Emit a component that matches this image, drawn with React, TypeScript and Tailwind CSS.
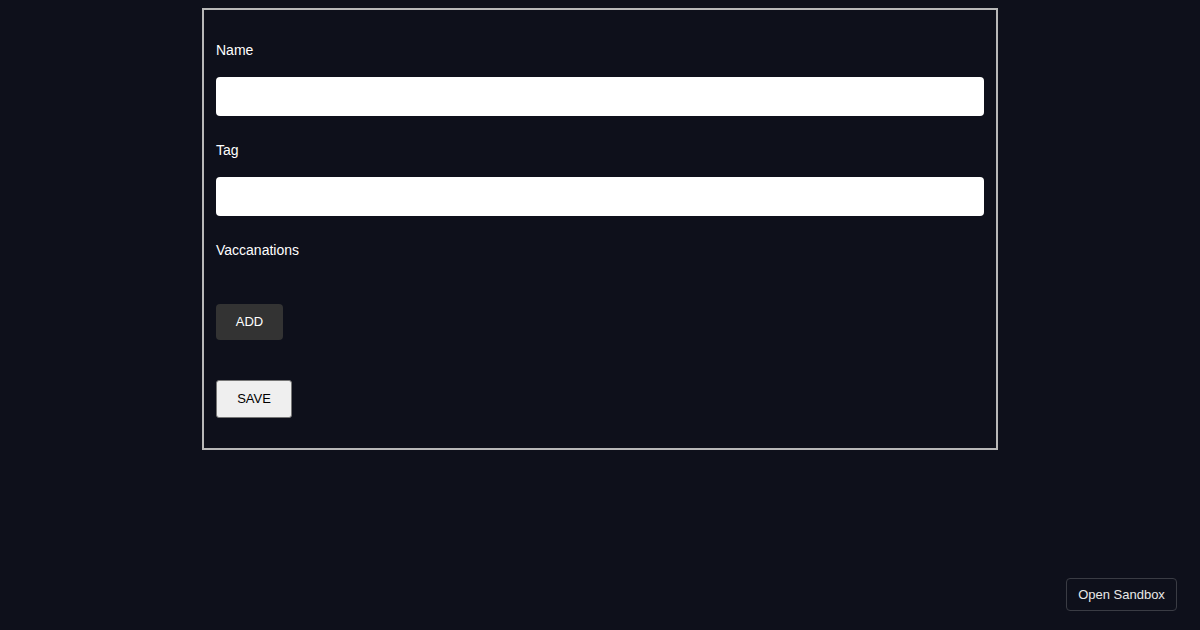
import React from 'react'

const Field = ({ label }: { label: string }) => (
  <div className="flex flex-col">
    <label className="h-5 leading-5 text-[14px] text-white">{label}</label>
    <input type="text" className="mt-[17px] h-[39px] w-full rounded-[4px] bg-white px-2 text-black outline-none" />
  </div>
)

export default function App() {
  return (
    <div className="relative h-[630px] w-full bg-[#0e101b] font-['Liberation_Sans',Arial,sans-serif]">
      <div className="pt-2">
        <form className="mx-auto w-[796px] border-2 border-[#b8b8b8] px-3 pb-[30px] pt-[30px]">
          <div className="flex flex-col gap-6">
            <Field label="Name" />
            <Field label="Tag" />
          </div>
          <div className="mt-6 h-5 leading-5 text-[14px] text-white">Vaccanations</div>
          <button type="button" className="mt-[44px] block h-9 w-[67px] rounded-[4px] bg-[#333333] text-[13px] text-white">
            ADD
          </button>
          <button type="button" className="mt-10 block h-[38px] w-[76px] rounded-[3px] border border-[#767676] bg-[#efefef] text-[13px] text-black">
            SAVE
          </button>
        </form>
      </div>
      <button className="absolute bottom-[19px] right-[23px] h-[33px] w-[111px] rounded-[4px] border border-[#3a3c44] bg-[#0e101b] text-[13px] text-[#e8e8e8]">
        Open Sandbox
      </button>
    </div>
  )
}
